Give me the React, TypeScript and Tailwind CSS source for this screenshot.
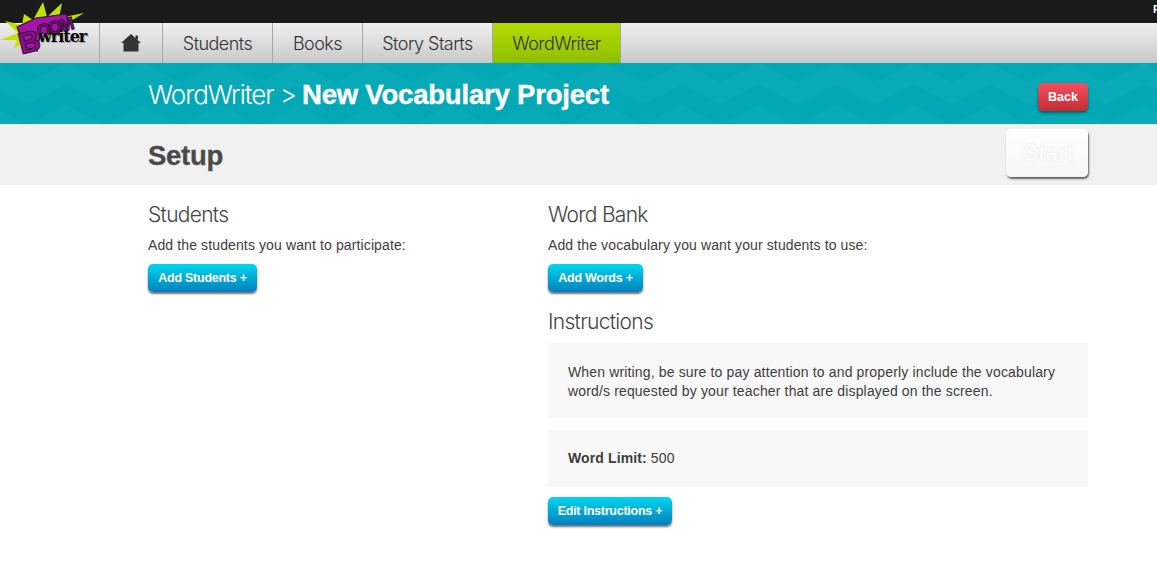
const sans = "font-['Liberation_Sans',Arial,sans-serif]";
const light = "font-['Inter',sans-serif] font-light";

function Logo() {
  return (
    <div className="absolute left-0 top-0 w-[92px] h-[56px]">
      <svg width="92" height="56" viewBox="0 0 92 56" className="absolute left-0 top-0">
        <polygon
          fill="#c2e200"
          points="0,40 18,33 5,21 22,25 24,14 33,20 43,2 47,17 62,3 59,18 84,13 64,25 62,36 36,38 27,52 22,44 14,48 17,40"
        />
        <polygon fill="#a514a9" stroke="#2a1030" strokeWidth="1.2" points="17,27 36,18 67,14 68,30 40,36 37,51 25,47" />
      </svg>
      <div className="absolute left-[17px] top-[15px] flex items-end rotate-[-14deg] font-bold font-['Liberation_Sans',sans-serif] text-[#8c0f92] leading-none [-webkit-text-stroke:1px_#2a1030]">
        <span className="text-[30px] leading-[30px]">B</span>
        <span className="text-[18px] leading-[30px] tracking-[-2.5px] -ml-[1px] mb-[8px]">OOM</span>
      </div>
      <span className="absolute left-[38px] top-[29px] text-[16px] leading-none font-bold font-['DejaVu_Serif',serif] text-black tracking-[-1px] [text-shadow:1px_1px_0_#aaa]">
        writer
      </span>
    </div>
  );
}

function HomeIcon() {
  return (
    <svg width="20" height="18" viewBox="0 0 20 18" fill="#333">
      <path d="M10 0 L20 9 H17.5 V17.5 H2.5 V9 H0 Z" />
      <rect x="14.5" y="1.5" width="2.5" height="4" />
    </svg>
  );
}

function NavTab({ label, active, width }: { label: string; active?: boolean; width: string }) {
  return (
    <div
      className={`${width} h-full flex items-center justify-center border-r border-[#a6a6a6] text-[18px] text-[#333] tracking-[-0.55px] ${light} ${
        active ? "bg-gradient-to-b from-[#b5dc00] to-[#8dc000] text-[#2f3a10]" : ""
      }`}
    >
      {label}
    </div>
  );
}

function BlueButton({ label, width }: { label: string; width: string }) {
  return (
    <button className={`${width} h-[28px] rounded-[5px] bg-gradient-to-b from-[#00d6ee] to-[#0080bd] text-white text-[12.5px] font-bold tracking-[-0.25px] shadow-[0_2px_2px_rgba(0,0,0,0.55)]`}>
      {label}
    </button>
  );
}

function ChevronPattern() {
  return (
    <svg className="absolute inset-0" width="1157" height="61">
      <defs>
        <pattern id="chev" x="66" y="0" width="77" height="42" patternUnits="userSpaceOnUse">
          <path d="M0 0 L38.5 20 L77 0 V21 L38.5 41 L0 21 Z" fill="#ffffff" fillOpacity="0.028" />
        </pattern>
      </defs>
      <rect width="1157" height="61" fill="url(#chev)" />
    </svg>
  );
}

export default function App() {
  return (
    <div className={`relative w-[1157px] h-[585px] overflow-hidden bg-white ${sans}`}>
      <div className="h-[23px] bg-[#1a1a1a] flex justify-end">
        <span className="text-[11px] font-bold text-white leading-[18px] w-[4px] overflow-hidden">F</span>
      </div>

      <nav className="h-[40px] flex bg-gradient-to-b from-[#f0f0f0] to-[#c9c9c9]">
        <div className="w-[100px] h-full border-r border-[#a6a6a6]" />
        <div className="w-[63px] h-full flex items-center justify-center border-r border-[#a6a6a6]">
          <HomeIcon />
        </div>
        <NavTab label="Students" width="w-[110px]" />
        <NavTab label="Books" width="w-[90px]" />
        <NavTab label="Story Starts" width="w-[130px]" />
        <NavTab label="WordWriter" width="w-[128px]" active />
      </nav>

      <header className="relative h-[61px] bg-[#02a8b5] flex items-center justify-between pl-[148px] pr-[69px]">
        <ChevronPattern />
        <h1 className="relative flex items-baseline gap-[6px] text-white leading-none mt-[3px]">
          <span className={`text-[26px] tracking-[-1px] ${light}`}>WordWriter &gt;</span>
          <span className="text-[27.5px] font-bold tracking-[-0.2px] [-webkit-text-stroke:0.4px_#fff]">New Vocabulary Project</span>
        </h1>
        <button className="relative w-[50px] h-[28px] pt-[1px] rounded-[5px] bg-gradient-to-b from-[#f64f5c] to-[#c32c37] text-white text-[12.5px] font-bold shadow-[0_2px_3px_rgba(0,0,0,0.45)] mt-[6px]">
          Back
        </button>
      </header>

      <div className="h-[61px] bg-[#f1f1f1] flex items-center justify-between pl-[148px] pr-[69px]">
        <h2 className="text-[27.5px] font-bold text-[#4a4a4a] tracking-[-0.3px] mt-[3px] [-webkit-text-stroke:0.3px_#4a4a4a]">Setup</h2>
        <button className="w-[82px] h-[48px] pl-[3px] rounded-[5px] bg-gradient-to-b from-white to-[#f6f6f6] text-[#fbfbfb] text-[23px] font-bold tracking-[-0.3px] shadow-[1px_2px_2px_rgba(0,0,0,0.6)] -mt-[3px] [text-shadow:0_0_2px_rgba(0,0,0,0.1)]">
          Start
        </button>
      </div>

      <main className="flex pl-[148px] pr-[69px] pt-[17px] text-[#3d3d3d]">
        <section className="w-[400px]">
          <h3 className={`text-[21px] leading-[25px] text-[#444] tracking-[-0.7px] ${light}`}>Students</h3>
          <p className="text-[14px] leading-[18px] mt-[9px] tracking-[0.12px]">Add the students you want to participate:</p>
          <div className="mt-[10px]">
            <BlueButton label="Add Students +" width="w-[109px]" />
          </div>
        </section>

        <section className="w-[540px]">
          <h3 className={`text-[21px] leading-[25px] text-[#444] tracking-[-0.7px] ${light}`}>Word Bank</h3>
          <p className="text-[14px] leading-[18px] mt-[9px] tracking-[0.12px]">Add the vocabulary you want your students to use:</p>
          <div className="mt-[10px]">
            <BlueButton label="Add Words +" width="w-[95px]" />
          </div>
          <h3 className={`text-[21px] leading-[25px] text-[#444] tracking-[-0.7px] mt-[17px] ${light}`}>Instructions</h3>
          <div className="mt-[9px] h-[75px] bg-[#f8f8f8] px-[20px] pt-[20px] text-[14px] leading-[19px] tracking-[0.15px]">
            When writing, be sure to pay attention to and properly include the vocabulary word/s requested by your teacher that are displayed on the screen.
          </div>
          <div className="mt-[12px] h-[57px] bg-[#f8f8f8] px-[20px] flex items-center text-[14px] tracking-[0.12px]">
            <span>
              <b>Word Limit:</b> 500
            </span>
          </div>
          <div className="mt-[10px]">
            <BlueButton label="Edit Instructions +" width="w-[124px]" />
          </div>
        </section>
      </main>

      <Logo />
    </div>
  );
}
